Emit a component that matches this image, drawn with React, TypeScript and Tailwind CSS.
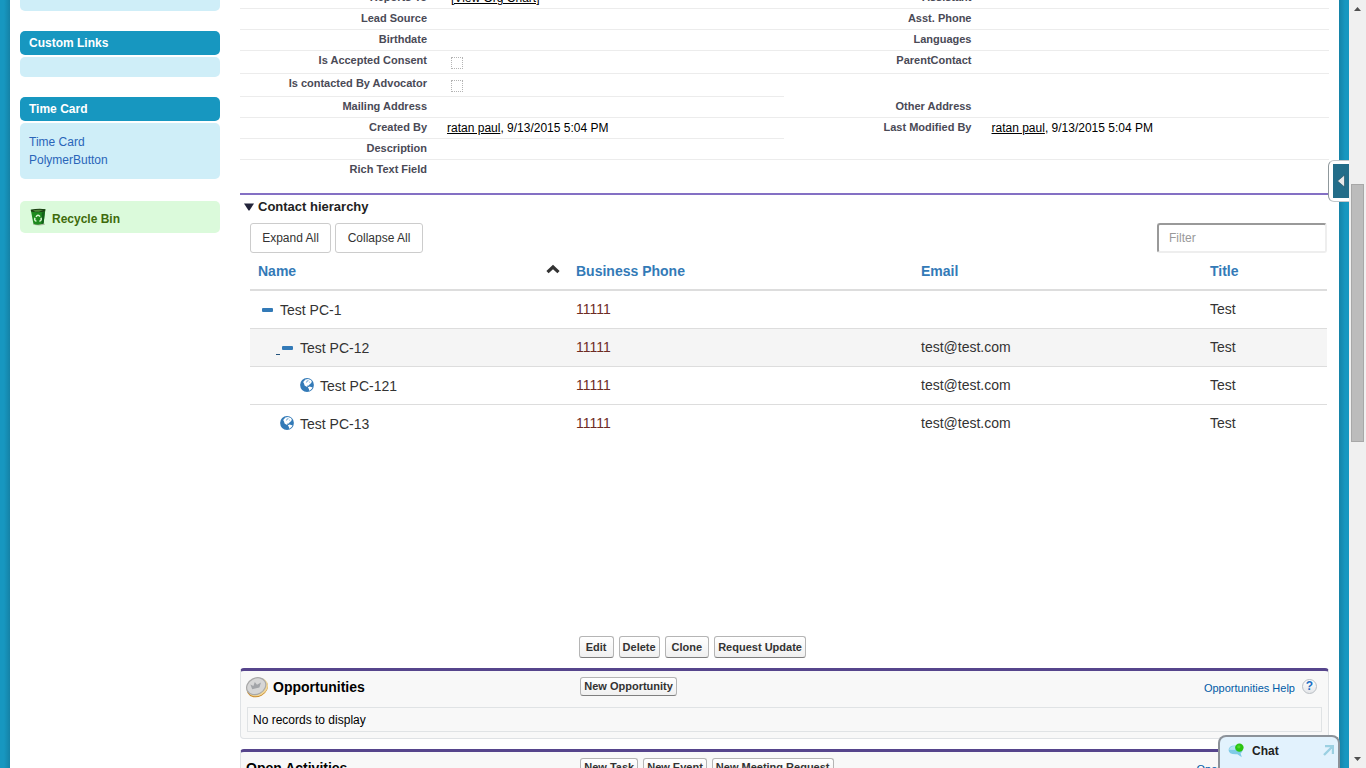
import React, { useState } from 'react';

interface DetailSide {
  label: string;
  value?: React.ReactNode;
  line?: boolean;
}

interface DetailRow {
  left: DetailSide;
  right?: DetailSide;
  tall?: boolean;
}

interface Contact {
  id: number;
  name: string;
  level: number;
  leaf: boolean;
  phone: string;
  email: string;
  title: string;
}

const CheckField: React.FC<{ label: string }> = ({ label }) => (
  <input
    type="checkbox"
    disabled
    aria-label={label}
    className="block appearance-none w-3 h-3 mt-1 ml-1 border border-dotted border-[#b4b4b4] bg-white"
  />
);

const UserStamp: React.FC = () => (
  <>
    <a href="#user" className="underline">ratan paul</a>, 9/13/2015 5:04 PM
  </>
);

const detailRows: DetailRow[] = [
  {
    left: { label: 'Reports To', value: <a href="#org" className="underline ml-1">[View Org Chart]</a>, line: true },
    right: { label: 'Assistant', line: true },
  },
  { left: { label: 'Lead Source', line: true }, right: { label: 'Asst. Phone', line: true } },
  { left: { label: 'Birthdate', line: true }, right: { label: 'Languages', line: true } },
  {
    left: { label: 'Is Accepted Consent', value: <CheckField label="Is Accepted Consent" />, line: true },
    right: { label: 'ParentContact', line: true },
    tall: true,
  },
  {
    left: { label: 'Is contacted By Advocator', value: <CheckField label="Is contacted By Advocator" />, line: true },
    right: { label: '' },
    tall: true,
  },
  { left: { label: 'Mailing Address', line: true }, right: { label: 'Other Address', line: true } },
  {
    left: { label: 'Created By', value: <UserStamp />, line: true },
    right: { label: 'Last Modified By', value: <UserStamp /> },
  },
  { left: { label: 'Description', line: true }, right: { label: '', line: true } },
  { left: { label: 'Rich Text Field' }, right: { label: '' } },
];

const contacts: Contact[] = [
  { id: 1, name: 'Test PC-1', level: 0, leaf: false, phone: '11111', email: '', title: 'Test' },
  { id: 2, name: 'Test PC-12', level: 1, leaf: false, phone: '11111', email: 'test@test.com', title: 'Test' },
  { id: 3, name: 'Test PC-121', level: 2, leaf: true, phone: '11111', email: 'test@test.com', title: 'Test' },
  { id: 4, name: 'Test PC-13', level: 1, leaf: true, phone: '11111', email: 'test@test.com', title: 'Test' },
];

const indents = ['pl-[10px]', 'pl-[30px]', 'pl-[50px]'];

const GlobeIcon = () => (
  <svg width="14" height="14" viewBox="0 0 14 14" className="mb-0.5">
    <circle cx="7" cy="7" r="6.900" fill="#337ab7" />
    <path d="M5.400 1.400 8 .9l2.800 1 1 1.400-.5 1.700-1.600 1.200-.9 1.200L7 7.800l.6 1.200-1.400-.4-1.600-1.200-.6-1.800L3.200 4z" fill="#fff" />
    <path d="M7.800 9.200l1.800-.7 1.600.5 1.400.4-1 1.600-1.500 1.300-1 .4-.2-1.600z" fill="#fff" />
    <path d="M7 2.600l1.400-.5.2.9-1.200.8-.8 1-.8-.6zM9 4l1-.6.2.8-.9.5z" fill="#7fb0d8" />
  </svg>
);

const MinusIcon = () => (
  <svg width="14" height="14" viewBox="0 0 14 14">
    <rect x="2" y="5" width="11" height="4" rx="1" fill="#337ab7" />
  </svg>
);

const BinIcon = () => (
  <svg width="16" height="18" viewBox="0 0 16 18">
    <ellipse cx="9" cy="16.200" rx="6" ry="1.300" fill="#a9b8a0" />
    <path d="M.8 1.800 15.400 1.200 13.600 15.600Q8 17.800 3.400 15.800z" fill="#1f8a1f" />
    <path d="M.8 1.800Q8 .2 15.400 1.200L15 3.400Q8 4.800 1.100 3.600z" fill="#1c3d14" />
    <path d="M3 2.200Q8 1.300 13.200 1.900L9 3.800H5z" fill="#4f8a3c" />
    <path d="M11.800 4.600 14.800 4 13.600 15.400 11.600 16z" fill="#14601a" />
    <path d="M6 8.800Q8 5.600 10 8.600M5 9.800Q3.900 12.600 6.400 13.200M11 9.800Q12 12.600 9.400 13.200" fill="none" stroke="#d9f5d2" strokeWidth="1.500" />
  </svg>
);

const CoinIcon = () => (
  <svg width="24" height="22" viewBox="0 0 24 22">
    <ellipse cx="12.400" cy="12" rx="11" ry="8.800" transform="rotate(-28 12.400 12)" fill="#c98b2c" />
    <ellipse cx="12.600" cy="11.200" rx="10.800" ry="8.600" transform="rotate(-28 12.600 11.200)" fill="#f0d79a" />
    <ellipse cx="11.200" cy="10.200" rx="10.600" ry="8.600" transform="rotate(-28 11.200 10.200)" fill="#a8a8a8" />
    <ellipse cx="11.200" cy="10.200" rx="9.400" ry="7.400" transform="rotate(-28 11.200 10.200)" fill="#d6d6d6" />
    <path d="M5.400 8.600l3 1.400 1.400-4 2.200 2.800 4-2.200-1.600 5-7.200 1.600z" fill="#a2a4a8" />
  </svg>
);

const ChatIcon = () => (
  <svg width="17" height="16" viewBox="0 0 17 16">
    <path d="M.6 7Q.6 2.600 7 2.400t7.600 4.200q0 2.400-2 3.600l1.200 4-4.400-3Q.6 11.800.600 7z" fill="#7fcbe6" />
    <path d="M1 6.800Q2 3 7 3v4z" fill="#b5e3f3" />
    <circle cx="11.400" cy="4.600" r="4.200" fill="#2bc410" />
    <circle cx="10.800" cy="3.800" r="1.600" fill="#4ed82e" />
  </svg>
);

const SideTitle: React.FC<{ children: React.ReactNode }> = ({ children }) => (
  <h2 className="h-6 px-[9px] leading-6 rounded-[5px] bg-[#1797c0] text-xs font-bold text-white">{children}</h2>
);

const Sidebar = () => (
  <aside className="w-[200px] shrink-0">
    <div className="h-[11px] rounded-b-[5px] bg-[#cfeef8]" />
    <section className="mt-5 flex flex-col gap-0.5">
      <SideTitle>Custom Links</SideTitle>
      <div className="h-5 rounded-[5px] bg-[#cfeef8]" />
    </section>
    <section className="mt-5 flex flex-col gap-0.5">
      <SideTitle>Time Card</SideTitle>
      <ul className="px-[9px] py-[10px] rounded-[5px] bg-[#cfeef8] text-xs leading-[18px] text-[#2a65b8]">
        <li><a href="#timecard">Time Card</a></li>
        <li><a href="#polymer">PolymerButton</a></li>
      </ul>
    </section>
    <a href="#bin" className="mt-[22px] h-8 px-[10px] flex items-center gap-1.5 rounded-[5px] bg-[#dbfadb] text-xs font-bold text-[#3f6b0c]">
      <BinIcon />
      <span className="pt-1">Recycle Bin</span>
    </a>
  </aside>
);

const DetailCells: React.FC<{ side: DetailSide }> = ({ side }) => {
  const line = side.line ? 'border-[#ececec]' : 'border-transparent';
  return (
    <>
      <th scope="row" className={`w-[18%] pt-px pb-[3px] pr-[9px] align-top text-right text-[11px] leading-4 font-bold text-[#4a4a56] border-b ${line}`}>
        {side.label}
      </th>
      <td className={`w-[32%] pt-0.5 pl-[11px] align-top text-xs leading-4 text-black border-b ${line}`}>
        {side.value}
      </td>
    </>
  );
};

const DetailTable = () => (
  <table className="-mt-3 w-full table-fixed border-separate border-spacing-0">
    <tbody>
      {detailRows.map((row, i) => (
        <tr key={i} className={row.tall ? 'h-[23px]' : 'h-[21px]'}>
          <DetailCells side={row.left} />
          {row.right && <DetailCells side={row.right} />}
        </tr>
      ))}
    </tbody>
  </table>
);

const Hierarchy = () => {
  const [filter, setFilter] = useState('');
  const [collapsed, setCollapsed] = useState(false);

  const rows = contacts
    .filter(c => !collapsed || c.level === 0)
    .filter(c => c.name.toLowerCase().includes(filter.toLowerCase()));

  return (
    <div className="min-h-[398px] pt-1 pl-[10px] pr-0.5 text-[#333]">
      <div className="flex gap-1">
        <button onClick={() => setCollapsed(false)} className="h-[30px] min-w-[81px] px-[10px] rounded-[3px] border border-[#ccc] bg-white text-xs">Expand All</button>
        <button onClick={() => setCollapsed(true)} className="h-[30px] min-w-[88px] px-[10px] rounded-[3px] border border-[#ccc] bg-white text-xs">Collapse All</button>
        <input
          type="text"
          value={filter}
          onChange={e => setFilter(e.target.value)}
          placeholder="Filter"
          aria-label="Filter"
          className="ml-auto w-[170px] h-[30px] px-[10px] rounded-[3px] border-2 border-t-[#999] border-l-[#999] border-r-[#eee] border-b-[#eee] bg-white text-xs placeholder:text-[#999]"
        />
      </div>
      <table className="w-full table-fixed border-separate border-spacing-0 text-sm leading-5 text-left">
        <thead>
          <tr className="text-[#337ab7]">
            <th className="w-[318px] p-2 border-b-2 border-[#ddd] font-bold">
              <div className="flex items-center justify-between">
                Name
                <svg width="14" height="10" viewBox="0 0 14 10" className="mb-1">
                  <path d="M1.500 8.200 7 3l5.500 5.200" fill="none" stroke="#333" strokeWidth="3.200" />
                </svg>
              </div>
            </th>
            <th className="w-[345px] p-2 border-b-2 border-[#ddd] font-bold">Business Phone</th>
            <th className="w-[289px] p-2 border-b-2 border-[#ddd] font-bold">Email</th>
            <th className="p-2 border-b-2 border-[#ddd] font-bold">Title</th>
          </tr>
        </thead>
        <tbody>
          {rows.map((c, i) => {
            const line = i < rows.length - 1 ? 'border-[#ddd]' : 'border-transparent';
            return (
              <tr key={c.id} className={c.id === 2 ? 'h-[38px] bg-[#f5f5f5]' : 'h-[38px]'}>
                <td className={`pt-[9px] pr-2 align-top border-b ${line} ${indents[c.level]}`}>
                  <div className="relative flex items-center gap-1.5">
                    {c.level === 1 && !c.leaf && <span className="absolute -left-1 bottom-[3px] w-1 h-px bg-[#23527c]" />}
                    {c.leaf ? <GlobeIcon /> : <MinusIcon />}
                    <span>{c.name}</span>
                  </div>
                </td>
                <td className={`p-2 align-top text-[#6e2c24] border-b ${line}`}>{c.phone}</td>
                <td className={`p-2 align-top border-b ${line}`}>{c.email}</td>
                <td className={`p-2 align-top border-b ${line}`}>{c.title}</td>
              </tr>
            );
          })}
        </tbody>
      </table>
    </div>
  );
};

const FormButton: React.FC<{ label: string; size?: string }> = ({ label, size = 'h-[19px] px-[3px]' }) => (
  <button
    className={`rounded-[3px] border border-[#b5b5b5] border-b-[#7f7f7f] bg-linear-to-b from-white to-[#f0f0f0] text-[11px] font-bold text-[#333] whitespace-nowrap ${size}`}
  >
    {label}
  </button>
);

interface RelatedListProps {
  title: string;
  buttons: string[];
  icon?: React.ReactNode;
}

const RelatedList: React.FC<RelatedListProps> = ({ title, buttons, icon }) => (
  <section className="mt-[10px] px-1.5 pb-1.5 rounded border border-[#dfe2e5] border-t-[3px] border-t-[#56458c] bg-[#f8f8f8]">
    <div className="flex h-9 pt-1">
      <h3 className="-ml-0.5 w-[31%] h-6 shrink-0 flex items-center gap-1 text-sm font-bold text-black">
        {icon}
        <span className={icon ? '' : 'pl-px'}>{title}</span>
      </h3>
      <div className="flex items-start gap-[5px] pl-0.5 pt-0.5">
        {buttons.map(b => <FormButton key={b} label={b} />)}
      </div>
      <a href="#help" className="ml-auto h-[26px] pr-[5px] flex items-center gap-[7px] text-[11px] text-[#015ba7]">
        <span>{title} Help</span>
        <span className="w-[15px] h-[15px] mb-1 rounded-full border border-[#b9bec4] bg-linear-to-b from-white to-[#e4e6e9] text-center text-xs leading-[13px] font-bold text-[#1c6fc4]">?</span>
      </a>
    </div>
    <div className="h-[25px] px-[5px] border border-[#e0e3e5] text-xs leading-6 text-black">No records to display</div>
  </section>
);

const ScrollTrack = () => (
  <div className="w-[17px] shrink-0 flex flex-col items-center bg-[#f0f0f0]">
    <svg width="17" height="17" viewBox="0 0 17 17"><path d="M5 11h7L8.500 7z" fill="#505050" /></svg>
    <div className="flex-[167]" />
    <div className="flex-[257] w-[13px] border border-[#a8a8a8] bg-[#bcbcbc]" />
    <div className="flex-[310]" />
    <svg width="17" height="17" viewBox="0 0 17 17"><path d="M5 6h7L8.500 10z" fill="#505050" /></svg>
  </div>
);

const App: React.FC = () => {
  return (
    <div className="h-screen flex overflow-hidden bg-white font-['Liberation_Sans',Arial,sans-serif]">
      <div className="relative flex-1 flex min-w-0 overflow-hidden">
        <div className="w-[10px] shrink-0 bg-linear-to-r from-[#1797c0] from-40% to-[#1582a6]" />
        <div className="flex-1 min-w-0 flex items-start gap-5 px-[10px]">
          <Sidebar />
          <main className="flex-1 min-w-0">
            <DetailTable />
            <div className="mt-3 border-t-2 border-[#8470c4]">
              <h3 className="pl-1 flex items-center gap-1 text-[13px] leading-6 font-bold text-[#222]">
                <svg width="10" height="8" viewBox="0 0 10 8"><path d="M0 .5h10L5.500 7.500h-1z" fill="#22243a" /></svg>
                Contact hierarchy
              </h3>
              <Hierarchy />
            </div>
            <div className="mt-[19px] pl-[31%]">
              <div className="ml-px flex gap-[5px]">
                <FormButton label="Edit" size="h-[22px] w-[35px]" />
                <FormButton label="Delete" size="h-[22px] px-[3px]" />
                <FormButton label="Clone" size="h-[22px] px-1.5" />
                <FormButton label="Request Update" size="h-[22px] px-[3px]" />
              </div>
            </div>
            <RelatedList title="Opportunities" buttons={['New Opportunity']} icon={<CoinIcon />} />
            <RelatedList title="Open Activities" buttons={['New Task', 'New Event', 'New Meeting Request']} />
          </main>
        </div>
        <div className="w-[10px] shrink-0 bg-linear-to-r from-[#1582a6] to-[#1797c0] to-60%" />

        <button
          aria-label="Open sidebar"
          className="absolute right-0 top-40 w-[21px] h-[42px] py-[3px] pl-1 rounded-l-md border border-r-0 border-[#c3c8cb] border-l-[#8f989c] bg-white"
        >
          <span className="flex h-full items-center justify-center bg-[#236d89]">
            <svg width="8" height="14" viewBox="0 0 8 14"><path d="M7.500 1v12L.5 7z" fill="#e8e8e8" stroke="#174a5e" strokeWidth=".6" /></svg>
          </span>
        </button>

        <button className="absolute right-[9px] bottom-0 w-[122px] h-[33px] px-2 pb-1 flex items-center rounded-t-lg border-2 border-b-0 border-[#8c9299] bg-[#e2f2fd] text-xs font-bold text-[#222]">
          <ChatIcon />
          <span className="ml-[7px]">Chat</span>
          <svg width="11" height="11" viewBox="0 0 11 11" className="ml-auto -mr-1">
            <path d="M2 1h8v8M9 2 1 10" fill="none" stroke="#9bd0e2" strokeWidth="2.400" />
          </svg>
        </button>
      </div>
      <ScrollTrack />
    </div>
  );
};

export default App;
